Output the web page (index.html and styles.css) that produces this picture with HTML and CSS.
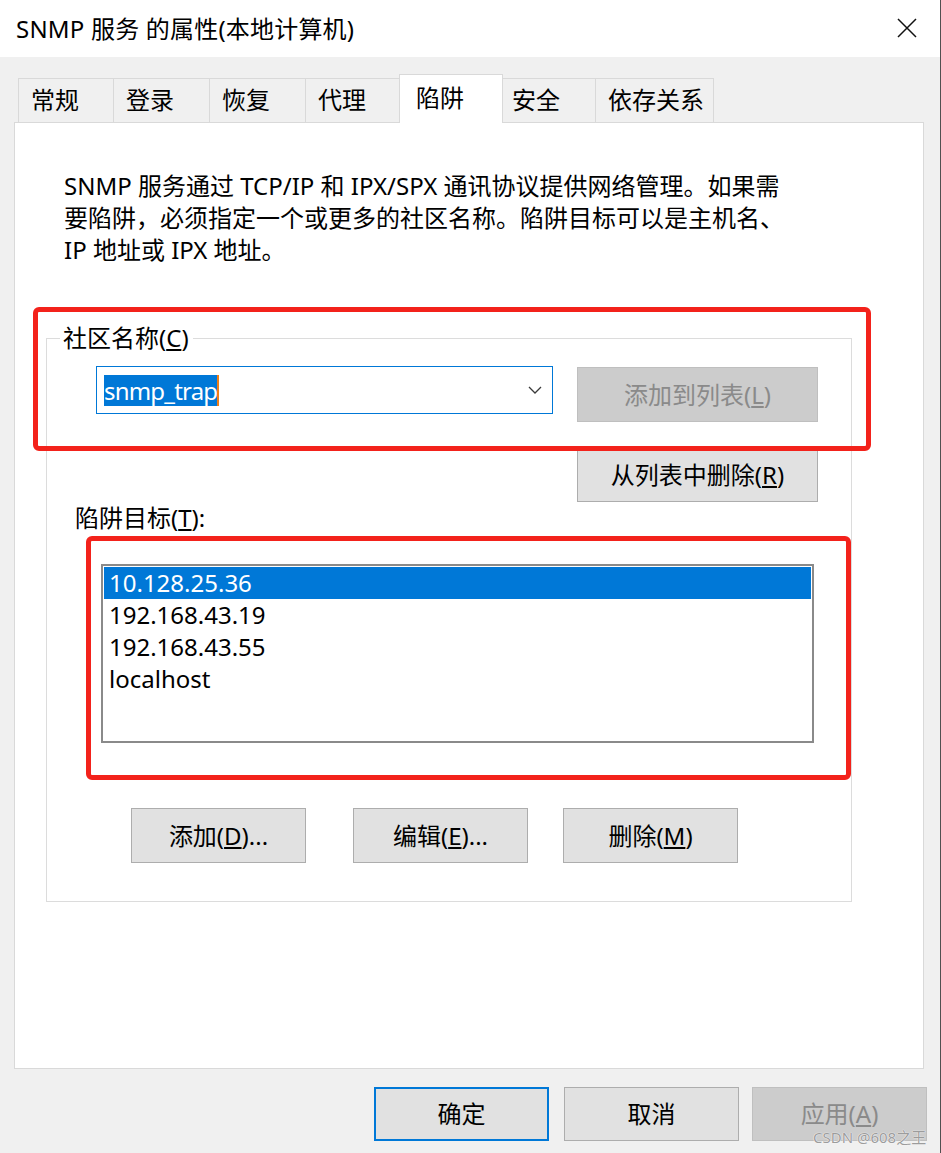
FILE: index.html
```html
<!DOCTYPE html>
<html lang="zh-CN">
<head>
<meta charset="utf-8">
<title>SNMP 服务 的属性</title>
<link rel="stylesheet" href="styles.css">
</head>
<body>
<div class="window">
  <div class="titlebar">
    <span class="title">SNMP 服务 的属性(本地计算机)</span>
    <svg class="close" width="20" height="20" viewBox="0 0 20 20"><path d="M1 1 L19 19 M19 1 L1 19" stroke="#111" stroke-width="1.5" fill="none"/></svg>
  </div>
  <div class="tabs">
    <div class="tab tab-a">常规</div>
    <div class="tab tab-b">登录</div>
    <div class="tab tab-b">恢复</div>
    <div class="tab tab-b">代理</div>
    <div class="tab active">陷阱</div>
    <div class="tab tab-b">安全</div>
    <div class="tab tab-c">依存关系</div>
  </div>
  <div class="panel">
    <p class="desc">SNMP 服务通过 TCP/IP 和 IPX/SPX 通讯协议提供网络管理。如果需<br>要陷阱，必须指定一个或更多的社区名称。陷阱目标可以是主机名、<br>IP 地址或 IPX 地址。</p>
    <fieldset class="group">
      <legend>社区名称(<u>C</u>)</legend>
      <div class="row1">
        <div class="combo">
          <span class="sel">snmp_trap</span><span class="caret"></span>
          <svg class="chev" width="14" height="8" viewBox="0 0 14 8"><path d="M1 1 L7 7 L13 1" stroke="#3a3a3a" stroke-width="1.3" fill="none"/></svg>
        </div>
        <div class="btn wide disabled add-list">添加到列表(<u>L</u>)</div>
      </div>
      <div class="btn wide remove-list">从列表中删除(<u>R</u>)</div>
      <div class="label">陷阱目标(<u>T</u>):</div>
      <div class="listbox">
        <div class="item selected">10.128.25.36</div>
        <div class="item">192.168.43.19</div>
        <div class="item">192.168.43.55</div>
        <div class="item">localhost</div>
      </div>
      <div class="btnrow">
        <div class="btn mid b-add">添加(<u>D</u>)...</div>
        <div class="btn mid b-edit">编辑(<u>E</u>)...</div>
        <div class="btn mid b-del">删除(<u>M</u>)</div>
      </div>
    </fieldset>
  </div>
  <div class="footer">
    <div class="btn mid default">确定</div>
    <div class="btn mid b-cancel">取消</div>
    <div class="btn mid disabled b-apply">应用(<u>A</u>)</div>
  </div>
  <div class="mark mark-1"></div>
  <div class="mark mark-2"></div>
  <div class="watermark">CSDN @608之王</div>
</div>
</body>
</html>
```

FILE: styles.css
```css
html, body {
  margin: 0;
  padding: 0;
}
body {
  font-family: "Noto Sans", "Noto Sans CJK SC", sans-serif;
  color: #000;
  background: #f0f0f0;
}
.window {
  position: relative;
  width: 941px;
  height: 1153px;
  box-sizing: border-box;
  border-right: 1px solid #505050;
  background: #f0f0f0;
  overflow: hidden;
}
.titlebar {
  height: 57px;
  background: #fff;
  display: flex;
  align-items: center;
  justify-content: space-between;
  padding: 0 23px 0 16px;
}
.title {
  font-size: 24px;
  line-height: 1;
  letter-spacing: 0.2px;
}
.close {
  display: block;
  margin-top: -2px;
}
.tabs {
  display: flex;
  align-items: flex-end;
  height: 48px;
  margin-top: 17px;
  padding-left: 18px;
}
.tab {
  box-sizing: border-box;
  height: 44px;
  line-height: 42px;
  font-size: 24px;
  padding-left: 12px;
  border: 1px solid #d9d9d9;
  border-bottom: none;
  margin-left: -1px;
  background: #f0f0f0;
}
.tab:first-child { margin-left: 0; }
.tab-a { width: 96px; }
.tab-b { width: 97px; }
.tab-c { width: 119px; }
.tab.active {
  position: relative;
  z-index: 2;
  width: 104px;
  height: 49px;
  line-height: 46px;
  margin-left: -3px;
  margin-right: -3px;
  margin-bottom: -1px;
  padding-left: 16px;
  background: #fff;
}
.panel {
  box-sizing: border-box;
  width: 910px;
  height: 947px;
  margin-left: 14px;
  border: 1px solid #d9d9d9;
  background: #fff;
  padding-top: 47px;
}
.desc {
  margin: 0 0 0 49px;
  font-size: 24px;
  line-height: 32px;
  white-space: nowrap;
}
.group {
  box-sizing: border-box;
  width: 806px;
  margin: 56px 0 0 31px;
  padding: 0 0 38px 0;
  border: 1px solid #dcdcdc;
}
.group legend {
  margin-left: 13px;
  padding: 0 4px 0 3px;
  font-size: 24px;
  line-height: 32px;
}
.row1 {
  display: flex;
  align-items: flex-start;
  margin-top: 12px;
}
.combo {
  box-sizing: border-box;
  width: 457px;
  height: 48px;
  margin-left: 49px;
  border: 1px solid #0078d7;
  display: flex;
  align-items: center;
  padding-left: 7px;
}
.sel {
  background: #0078d7;
  color: #fff;
  font-size: 24px;
  line-height: 31px;
  letter-spacing: -0.8px;
}
.caret {
  width: 2px;
  height: 31px;
  background: #ee7d17;
}
.chev {
  margin-left: auto;
  margin-right: 10px;
}
.btn {
  box-sizing: border-box;
  display: flex;
  align-items: center;
  justify-content: center;
  border: 1px solid #adadad;
  background: #e1e1e1;
  font-size: 24px;
  line-height: 1;
}
.btn.disabled {
  background: #cccccc;
  border-color: #bfbfbf;
  color: #8a8a8a;
}
.wide {
  width: 241px;
  height: 55px;
}
.add-list {
  margin: 1px 0 0 24px;
}
.remove-list {
  margin: 25px 0 0 530px;
}
.label {
  margin-left: 28px;
  font-size: 24px;
  line-height: 32px;
}
.listbox {
  box-sizing: border-box;
  width: 713px;
  height: 179px;
  margin: 30px 0 0 54px;
  border: 2px solid #8a8a8a;
  padding: 1px;
}
.item {
  height: 32px;
  line-height: 32px;
  padding-left: 5px;
  font-size: 24px;
}
.item.selected {
  background: #0078d7;
  color: #fff;
}
.btnrow {
  display: flex;
  margin-top: 65px;
}
.mid {
  width: 175px;
  height: 55px;
}
.b-add { margin-left: 84px; }
.b-edit { margin-left: 47px; }
.b-del { margin-left: 35px; }
.footer {
  display: flex;
  justify-content: flex-end;
  margin-top: 18px;
  padding-right: 13px;
}
.footer .mid {
  height: 54px;
}
.btn.default {
  border: 2px solid #0078d7;
}
.b-cancel { margin-left: 15px; }
.b-apply { margin-left: 13px; }
.mark {
  position: absolute;
  box-sizing: border-box;
  border: 5px solid #f3221b;
  border-radius: 6px;
}
.mark-1 {
  left: 33px;
  top: 307px;
  width: 838px;
  height: 144px;
}
.mark-2 {
  left: 86px;
  top: 536px;
  width: 765px;
  height: 244px;
}
.watermark {
  position: absolute;
  left: 813px;
  top: 1130px;
  font-size: 15px;
  line-height: 15px;
  color: #9c9c9c;
  text-shadow: 0 0 1px #fff, 0 0 1px #fff;
  white-space: nowrap;
}
```
